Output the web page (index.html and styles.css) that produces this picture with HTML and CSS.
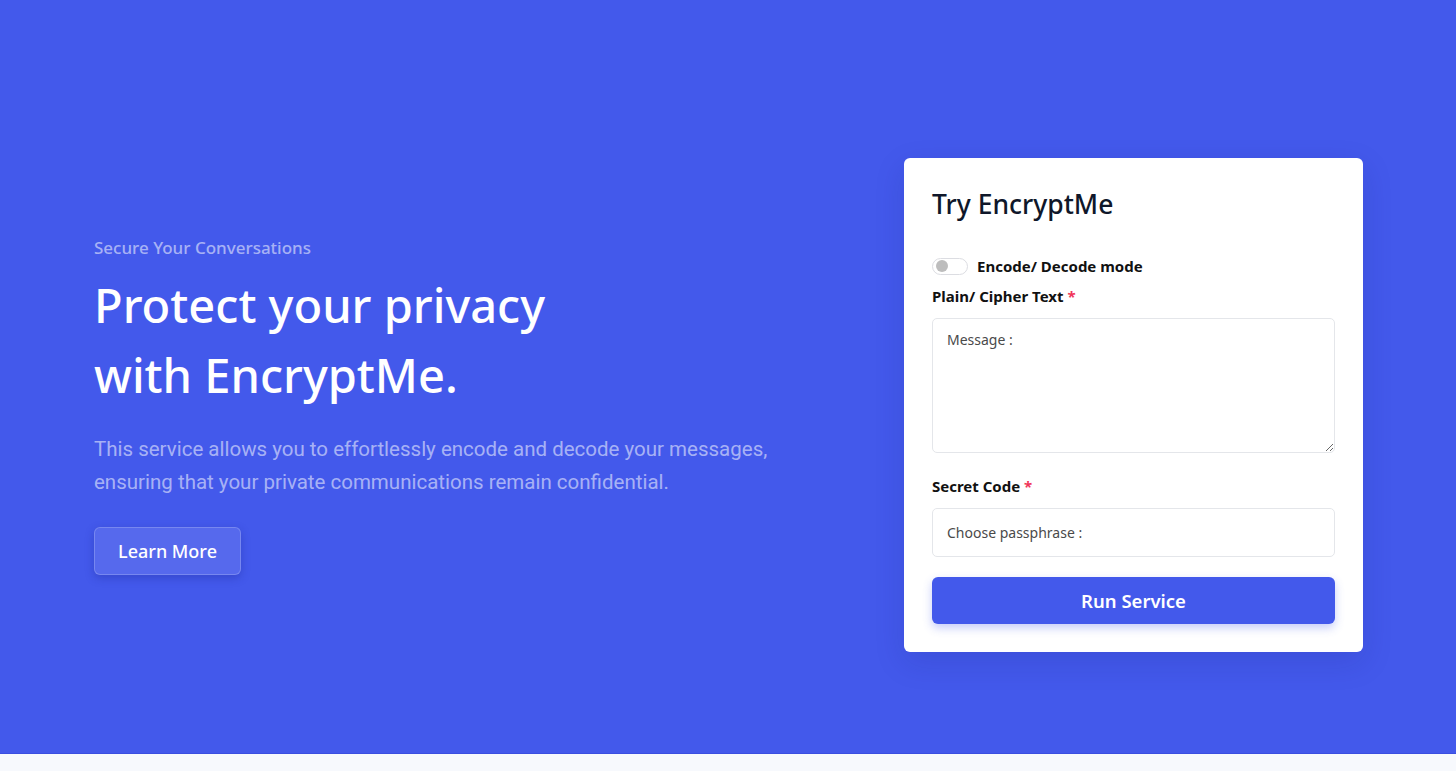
FILE: index.html
```html
<!DOCTYPE html>
<html lang="en">
<head>
<meta charset="utf-8">
<title>EncryptMe</title>
<link rel="stylesheet" href="styles.css">
</head>
<body>
<section class="hero">
  <div class="hero-inner">
    <div class="intro">
      <p class="eyebrow">Secure Your Conversations</p>
      <h1 class="headline">Protect your privacy<br>with EncryptMe.</h1>
      <p class="lead">This service allows you to effortlessly encode and decode your messages,<br>ensuring that your private communications remain confidential.</p>
      <a class="btn-ghost" href="#">Learn More</a>
    </div>
    <form class="card">
      <h2 class="card-title">Try EncryptMe</h2>
      <label class="switch-row">
        <span class="switch"><span class="knob"></span></span>
        <span class="switch-label">Encode/ Decode mode</span>
      </label>
      <label class="field-label">Plain/ Cipher Text <span class="req">*</span></label>
      <textarea class="textarea" placeholder="Message :"></textarea>
      <label class="field-label field-gap">Secret Code <span class="req">*</span></label>
      <input class="input" type="text" placeholder="Choose passphrase :">
      <button class="btn-primary" type="button">Run Service</button>
    </form>
  </div>
</section>
<section class="below"></section>
</body>
</html>
```

FILE: styles.css
```css
* { box-sizing: border-box; }
html, body { margin: 0; padding: 0; }
body {
  font-family: "Noto Sans", "Lato", sans-serif;
  background: #f7f9fd;
  color: #111827;
}
.hero {
  height: 754px;
  background: #4359eb;
  border-bottom: 1px solid #3a4fe0;
  padding: 57px 93px 0 94px;
}
.hero-inner {
  height: 100%;
  display: flex;
  align-items: center;
  justify-content: space-between;
}
.intro { padding-top: 2px; }
.eyebrow {
  margin: 0;
  font-size: 17px;
  line-height: 22px;
  color: rgba(255,255,255,0.55);
  font-weight: 500;
}
.headline {
  margin: 11px 0 0;
  font-size: 47px;
  line-height: 70px;
  font-weight: 500;
  color: #fff;
}
.lead {
  margin: 23px 0 0;
  font-family: "Roboto", "Lato", sans-serif;
  font-size: 20.5px;
  line-height: 33px;
  font-weight: 400;
  color: rgba(255,255,255,0.55);
}
.btn-ghost {
  display: inline-flex;
  align-items: center;
  justify-content: center;
  margin-top: 28px;
  width: 147px;
  height: 48px;
  background: rgba(255,255,255,0.1);
  border: 1px solid rgba(255,255,255,0.2);
  border-radius: 6px;
  box-shadow: 0 3px 8px rgba(30,40,150,0.35);
  color: #fff;
  font-size: 18px;
  font-weight: 500;
  text-decoration: none;
}
.card {
  width: 459px;
  background: #fff;
  border-radius: 6px;
  padding: 30px 28px 28px;
  display: flex;
  flex-direction: column;
  box-shadow: 0 10px 30px rgba(20,30,120,0.15);
}
.card-title {
  margin: 0;
  font-size: 26.5px;
  line-height: 32px;
  font-weight: 500;
  color: #0f172a;
}
.switch-row {
  margin-top: 35px;
  display: flex;
  align-items: center;
  height: 22px;
  gap: 9px;
}
.switch {
  width: 36px;
  height: 17px;
  border: 1px solid #dcdde2;
  border-radius: 9px;
  display: flex;
  align-items: center;
  padding-left: 3px;
}
.knob {
  width: 12px;
  height: 12px;
  border-radius: 50%;
  background: #bdbdbd;
}
.switch-label, .field-label {
  font-size: 15px;
  font-weight: 700;
  color: #111;
}
.field-label {
  margin-top: 8px;
  line-height: 22px;
}
.field-gap { margin-top: 22px; }
.req { color: #f0365a; }
.textarea, .input {
  font-family: "Noto Sans", "Lato", sans-serif;
  font-size: 14px;
  color: #333;
  border: 1px solid #e4e6ea;
  border-radius: 5px;
  padding: 11px 14px;
  width: 100%;
  margin-top: 11px;
  outline: none;
}
.textarea { height: 135px; resize: vertical; }
.input { height: 49px; }
.textarea::placeholder, .input::placeholder { color: #4a4a4a; }
.btn-primary {
  margin-top: 20px;
  height: 47px;
  width: 100%;
  border: none;
  border-radius: 6px;
  background: #4359eb;
  color: #fff;
  font-family: "Noto Sans", "Lato", sans-serif;
  font-size: 18.5px;
  font-weight: 600;
  box-shadow: 0 4px 10px rgba(67,89,235,0.3);
  cursor: pointer;
}
.below { height: 20px; background: #f7f9fd; }
```
